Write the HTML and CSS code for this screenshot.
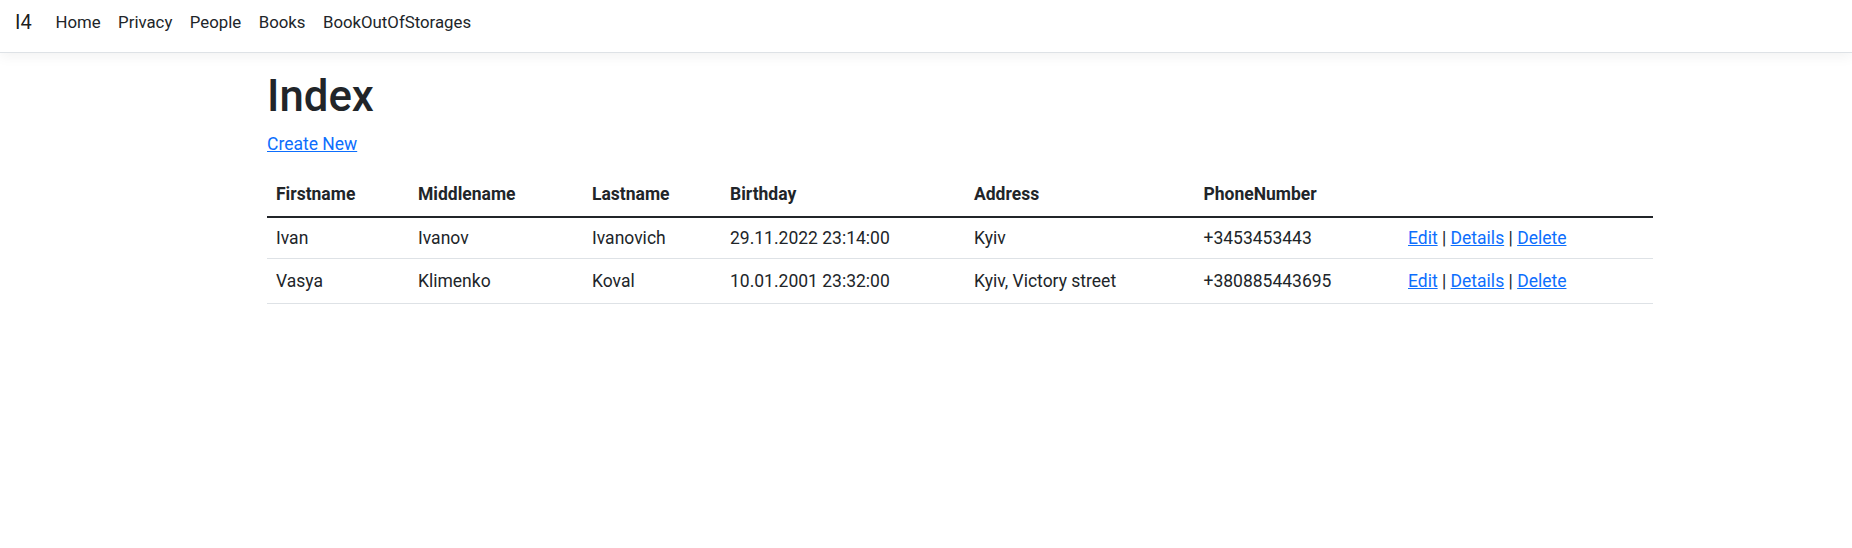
FILE: index.html
```html
<!DOCTYPE html>
<html lang="en">
<head>
<meta charset="utf-8">
<title>Index - I4</title>
<link rel="stylesheet" href="styles.css">
</head>
<body>
<header class="navbar">
  <a class="brand" href="#">I4</a>
  <nav class="nav">
    <a class="nav-link" href="#">Home</a>
    <a class="nav-link" href="#">Privacy</a>
    <a class="nav-link" href="#">People</a>
    <a class="nav-link" href="#">Books</a>
    <a class="nav-link" href="#">BookOutOfStorages</a>
  </nav>
</header>
<main class="container">
  <h1 class="title">Index</h1>
  <p class="create"><a href="#">Create New</a></p>
  <table class="table">
    <colgroup>
      <col class="c1"><col class="c2"><col class="c3"><col class="c4"><col class="c5"><col class="c6"><col class="c7">
    </colgroup>
    <thead>
      <tr>
        <th>Firstname</th>
        <th>Middlename</th>
        <th>Lastname</th>
        <th>Birthday</th>
        <th>Address</th>
        <th>PhoneNumber</th>
        <th></th>
      </tr>
    </thead>
    <tbody>
      <tr>
        <td>Ivan</td>
        <td>Ivanov</td>
        <td>Ivanovich</td>
        <td>29.11.2022 23:14:00</td>
        <td>Kyiv</td>
        <td>+3453453443</td>
        <td><a href="#">Edit</a> | <a href="#">Details</a> | <a href="#">Delete</a></td>
      </tr>
      <tr>
        <td>Vasya</td>
        <td>Klimenko</td>
        <td>Koval</td>
        <td>10.01.2001 23:32:00</td>
        <td>Kyiv, Victory street</td>
        <td>+380885443695</td>
        <td><a href="#">Edit</a> | <a href="#">Details</a> | <a href="#">Delete</a></td>
      </tr>
    </tbody>
  </table>
</main>
</body>
</html>
```

FILE: styles.css
```css
html, body {
  margin: 0;
  padding: 0;
  background: #ffffff;
}
body {
  font-family: Roboto, "Noto Sans", sans-serif;
  font-size: 17.5px;
  line-height: 26px;
  color: #212529;
}
a {
  color: #0d6efd;
}
.navbar {
  box-sizing: border-box;
  height: 53px;
  padding: 9px 0 0 15px;
  display: flex;
  align-items: flex-start;
  border-bottom: 1px solid #dee2e6;
  box-shadow: 0 4px 12px rgba(0, 0, 0, 0.05);
  background: #ffffff;
}
.brand {
  color: rgba(0, 0, 0, 0.9);
  text-decoration: none;
  font-size: 20px;
  margin-right: 15px;
}
.nav {
  display: flex;
  font-size: 16.8px;
}
.nav-link {
  color: #212529;
  text-decoration: none;
  padding: 0 8.75px;
}
.container {
  width: 1386px;
  margin: 17px 0 0 267px;
}
.title {
  font-size: 43.75px;
  line-height: 52.5px;
  font-weight: 500;
  margin: 0 0 8px 0;
}
.create {
  margin: 0 0 15px 0;
}
.table {
  width: 100%;
  table-layout: fixed;
  border-collapse: collapse;
}
.c1 { width: 142px; }
.c2 { width: 174px; }
.c3 { width: 138px; }
.c4 { width: 244px; }
.c5 { width: 229.5px; }
.c6 { width: 204.5px; }
.c7 { width: 254px; }
.table th {
  text-align: left;
  font-weight: 700;
  padding: 9px 9px;
  border-bottom: 2px solid #212529;
}
.table td {
  padding: 9px 9px;
  border-bottom: 1px solid #dee2e6;
  white-space: nowrap;
}
.table tbody tr:first-child td {
  padding-top: 7px;
  padding-bottom: 7px;
}
```
